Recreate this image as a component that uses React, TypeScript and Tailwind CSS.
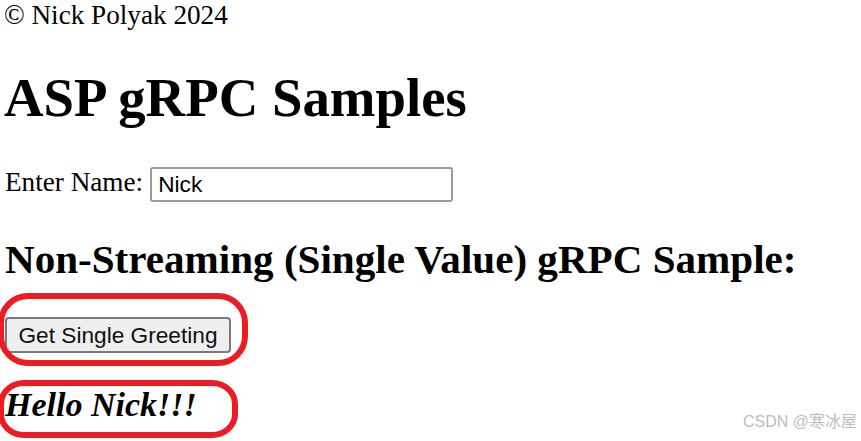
import React from "react";

export default function App() {
  return (
    <div className="relative w-[861px] h-[441px] overflow-hidden bg-white text-black" style={{ fontFamily: '"Liberation Serif", "Times New Roman", serif' }}>
      <div className="flex flex-col items-start pl-[4px]">
        <div className="text-[27.2px] leading-[31px]">© Nick Polyak 2024</div>
        <h1 className="mt-[36px] text-[54.8px] leading-[62px] font-bold">ASP gRPC Samples</h1>
        <div className="mt-[38px] flex items-start gap-[7px] pl-[1px]">
          <span className="text-[27.2px] leading-[31px]">Enter Name:</span>
          <input
            readOnly
            value="Nick"
            className="w-[303px] h-[35px] border-2 border-[#9a9a9a] rounded-[3px] px-[6px] text-[22.67px] text-black outline-none"
            style={{ fontFamily: '"Liberation Sans", Arial, sans-serif' }}
          />
        </div>
        <h2 className="mt-[34px] text-[41.1px] leading-[47px] font-bold pl-[1px]">Non-Streaming (Single Value) gRPC Sample:</h2>
        <div className="mt-[34px] pl-[1px]">
          <button
            className="w-[226px] h-[36px] bg-[#efefef] border-2 border-[#7a7a7a] rounded-[4px] text-[22.67px] leading-none text-[#111]"
            style={{ fontFamily: '"Liberation Sans", Arial, sans-serif' }}
          >
            Get Single Greeting
          </button>
        </div>
        <h3 className="mt-[32px] text-[34px] leading-[39px] font-bold italic pl-[1px]">Hello Nick!!!</h3>
      </div>

      <div className="absolute left-[-2px] top-[293px] w-[250px] h-[73px] border-[6px] border-[#ec1c24] rounded-[30px/30px]" />
      <div className="absolute left-[-2px] top-[380px] w-[240px] h-[58px] border-[6px] border-[#ec1c24] rounded-[26px/24px]" />

      <div
        className="absolute right-[4px] bottom-[10px] text-[16px] leading-[18px] text-[#bdbdbd] whitespace-nowrap"
        style={{ fontFamily: '"Liberation Sans", Arial, "Noto Sans CJK SC", sans-serif' }}
      >
        CSDN @寒冰屋
      </div>
    </div>
  );
}
